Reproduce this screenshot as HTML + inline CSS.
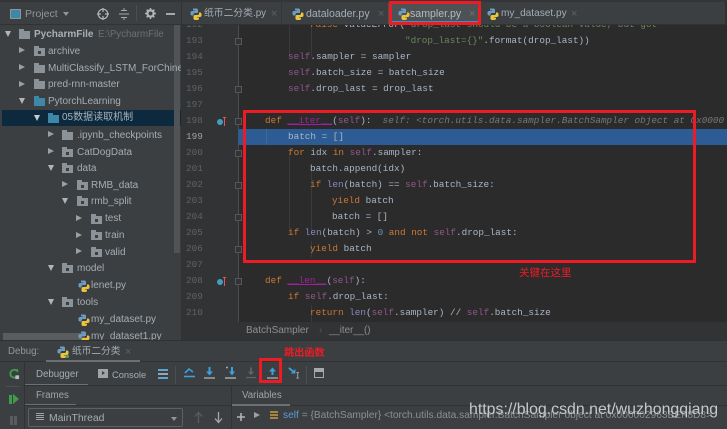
<!DOCTYPE html>
<html><head><meta charset="utf-8"><style>
html,body{margin:0;padding:0;background:#2b2b2b}
#p{position:relative;width:727px;height:429px;overflow:hidden;background:#2b2b2b;font-family:"Liberation Sans","Noto Sans CJK SC",sans-serif;filter:blur(.35px)}
#p div,#p svg{position:absolute}
.r{height:16px;line-height:16px;font-size:10px;color:#a4adb4;white-space:nowrap;margin-top:1px}
.c{font-family:"Liberation Mono",monospace;font-size:9.33px;height:16px;line-height:16px;color:#a9b7c6;white-space:pre}
.n{font-family:"Liberation Mono",monospace;font-size:9.33px;height:16px;line-height:16px;color:#606366;left:186px}
i{font-style:normal}
.k{color:#cc7832}.s{color:#94558d}.t{color:#6a8759}.b{color:#8888c6}.d{color:#6897bb}.m{color:#a020a0;text-decoration:underline}
.h{color:#787878;font-style:italic}
.x{width:0;height:0;border-top:3.5px solid transparent;border-bottom:3.5px solid transparent;border-left:6px solid #9aa0a4}
.o{width:0;height:0;border-left:3.5px solid transparent;border-right:3.5px solid transparent;border-top:6px solid #b0b5b8}
.f{width:11px;height:8px;background:#8b9398}
.f:before{content:"";position:absolute;left:0;top:-2px;width:5px;height:2px;background:#8b9398}
.q:after{content:"";position:absolute;left:4px;top:3px;width:3px;height:3px;background:#3c3f41}
.fb{background:#3d87a8}.fb:before{background:#3d87a8}
.g{width:1px;background:#3b3b3b}
.fo{width:5px;height:5px;border:1px solid #55585a;left:235px;background:#313335}
.rb{border:3px solid #ed1c24;box-sizing:border-box}
.l{font-size:9.7px;color:#a4adb4;white-space:nowrap;height:14px;line-height:14px}
.tb{font-size:10.5px}
</style></head><body><div id="p">
<svg width="0" height="0"><defs><symbol id="py" viewBox="0 0 12 12"><path d="M3 0.500h4l1 1V5H4.500L3.500 6V7.500H1.500L0.500 6.500V4l1-1H5V2.500H3z" fill="#6f9bc0"/><path d="M9 4.500h1.500l1 1V8l-1 1H7v.5h2V11l-1 1H4.500l-1-1V8l1-1H8l1-1z" fill="#eac43a"/></symbol></defs></svg>

<!-- top bar -->
<div style="left:0;top:0;width:727px;height:24px;background:#3c3f41"></div>
<div style="left:0;top:0;width:727px;height:2px;background:#333537"></div>
<div style="left:0;top:24px;width:727px;height:1px;background:#323232"></div>
<div style="left:181px;top:0;width:1px;height:340px;background:#323232"></div>

<div style="left:10px;top:9px;width:9px;height:8px;border:1px solid #8e9598;background:#3d87a8"></div>
<div class="l tb" style="left:25px;top:7px;color:#8f979b">Project</div>
<div class="o" style="left:63px;top:12px;border-top-width:4px;border-top-color:#8f979b"></div>
<svg style="left:97px;top:8px" width="12" height="12" viewBox="0 0 12 12"><circle cx="6" cy="6" r="4.800" fill="none" stroke="#b1b5b8" stroke-width="1.200"/><path d="M6 0v4M6 8v4M0 6h4M8 6h4" stroke="#b1b5b8" stroke-width="1.200"/></svg>
<svg style="left:118px;top:8px" width="12" height="12" viewBox="0 0 12 12"><path d="M1 6h10M3 2.500h6M3 9.500h6M6 0v3M6 9v3" stroke="#a5a9ac" stroke-width="1"/></svg>
<div style="left:136px;top:5px;width:1px;height:16px;background:#4c4f51"></div>
<svg style="left:145px;top:8px" width="11" height="11" viewBox="0 0 12 12"><circle cx="6" cy="6" r="3.400" fill="none" stroke="#b1b5b8" stroke-width="2.400"/><path d="M6 0v2M6 10v2M0 6h2M10 6h2M1.800 1.800l1.400 1.400M8.800 8.800l1.400 1.400M1.800 10.200l1.400-1.400M8.800 3.200l1.400-1.400" stroke="#b1b5b8" stroke-width="1.600"/></svg>
<div style="left:166px;top:13px;width:9px;height:1.500px;background:#a5a9ac"></div>

<!-- tabs -->
<svg style="left:190px;top:8px" width="12" height="12"><use href="#py"/></svg>
<div class="l" style="left:204px;top:7px;color:#a4adb4;font-size:9.8px">纸币二分类.py</div>
<div class="l" style="left:271px;top:7px;color:#5c6164;font-size:11px">×</div>
<div style="left:281px;top:2px;width:1px;height:22px;background:#343638"></div>
<svg style="left:292px;top:8px" width="12" height="12"><use href="#py"/></svg>
<div class="l" style="left:306px;top:7px;color:#a4adb4;font-size:10.6px">dataloader.py</div>
<div class="l" style="left:378px;top:7px;color:#5c6164;font-size:11px">×</div>
<div style="left:388px;top:3px;width:93px;height:21px;background:#4e5254"></div>
<div style="left:391px;top:21px;width:88px;height:2px;background:#4a88c7"></div>
<svg style="left:398px;top:8px" width="12" height="12"><use href="#py"/></svg>
<div class="l" style="left:410px;top:7px;color:#b3bac0;font-size:10.6px">sampler.py</div>
<div class="l" style="left:469px;top:7px;color:#6f7376;font-size:11px">×</div>
<svg style="left:487px;top:8px" width="12" height="12"><use href="#py"/></svg>
<div class="l" style="left:501px;top:7px;color:#a4adb4;font-size:10.1px">my_dataset.py</div>
<div class="l" style="left:571px;top:7px;color:#5c6164;font-size:11px">×</div>
<div style="left:725px;top:2px;width:2px;height:22px;background:#2f3133"></div>

<!-- sidebar -->
<div style="left:0;top:25px;width:181px;height:315px;background:#3c3f41"></div>
<div style="left:2px;top:110px;width:179px;height:16px;background:#0d293e"></div>
<div style="left:174px;top:25px;width:6px;height:228px;background:#515456"></div>
<div style="left:3px;top:333px;width:82px;height:7px;background:#5a5d5f"></div>

<div class="o" style="left:5px;top:31px"></div><div class="f" style="left:19px;top:31px"></div>
<div class="r" style="left:34px;top:26px;color:#a9b0b5;font-weight:bold">PycharmFile</div><div class="r" style="left:98px;top:26px;color:#6b7073;font-size:9.700px">E:\PycharmFile</div>

<div class="x" style="left:19px;top:47px"></div><div class="f q" style="left:34px;top:48px"></div><div class="r" style="left:48px;top:43px">archive</div>
<div class="x" style="left:19px;top:64px"></div><div class="f" style="left:34px;top:65px"></div><div class="r" style="left:48px;top:60px;width:133px;overflow:hidden">MultiClassify_LSTM_ForChinese</div>
<div class="x" style="left:19px;top:81px"></div><div class="f" style="left:34px;top:81px"></div><div class="r" style="left:48px;top:76px">pred-rnn-master</div>
<div class="o" style="left:19px;top:98px"></div><div class="f fb" style="left:34px;top:98px"></div><div class="r" style="left:48px;top:93px">PytorchLearning</div>
<div class="o" style="left:34px;top:115px;border-top-color:#c8ccd0"></div><div class="f fb" style="left:48px;top:115px"></div><div class="r" style="left:62px;top:110px;color:#aab3ba;margin-top:0">05数据读取机制</div>

<div class="x" style="left:48px;top:131px"></div><div class="f" style="left:62px;top:132px"></div><div class="r" style="left:77px;top:127px">.ipynb_checkpoints</div>
<div class="x" style="left:48px;top:148px"></div><div class="f q" style="left:62px;top:149px"></div><div class="r" style="left:77px;top:144px">CatDogData</div>
<div class="o" style="left:48px;top:165px"></div><div class="f q" style="left:62px;top:165px"></div><div class="r" style="left:77px;top:160px">data</div>
<div class="x" style="left:62px;top:181px"></div><div class="f q" style="left:77px;top:182px"></div><div class="r" style="left:91px;top:177px">RMB_data</div>
<div class="o" style="left:62px;top:198px"></div><div class="f q" style="left:77px;top:198px"></div><div class="r" style="left:91px;top:193px">rmb_split</div>
<div class="x" style="left:76px;top:215px"></div><div class="f q" style="left:91px;top:216px"></div><div class="r" style="left:105px;top:210px">test</div>
<div class="x" style="left:76px;top:232px"></div><div class="f q" style="left:91px;top:232px"></div><div class="r" style="left:105px;top:227px">train</div>
<div class="x" style="left:76px;top:248px"></div><div class="f q" style="left:91px;top:249px"></div><div class="r" style="left:105px;top:244px">valid</div>
<div class="o" style="left:48px;top:265px"></div><div class="f q" style="left:62px;top:265px"></div><div class="r" style="left:77px;top:260px">model</div>
<svg style="left:78px;top:280px" width="12" height="12"><use href="#py"/></svg><div class="r" style="left:91px;top:277px">lenet.py</div>
<div class="o" style="left:48px;top:299px"></div><div class="f q" style="left:62px;top:299px"></div><div class="r" style="left:77px;top:294px">tools</div>
<svg style="left:78px;top:314px" width="12" height="12"><use href="#py"/></svg><div class="r" style="left:91px;top:311px">my_dataset.py</div>
<svg style="left:78px;top:331px" width="12" height="9" viewBox="0 0 12 9"><use href="#py" width="12" height="12"/></svg>
<div style="left:91px;top:328px;width:90px;height:12px;overflow:hidden"><div class="r" style="left:0;top:0">my_dataset1.py</div></div>

<!-- gutter -->
<div style="left:182px;top:25px;width:56px;height:297px;background:#313335"></div>
<div style="left:238px;top:25px;width:1px;height:297px;background:#4a4c4e"></div>

<!-- guides -->
<div class="g" style="left:289px;top:25px;height:32px"></div>
<div class="g" style="left:289px;top:153px;height:80px"></div>
<div class="g" style="left:311px;top:25px;height:32px"></div>
<div class="g" style="left:311px;top:169px;height:64px"></div>
<div class="g" style="left:311px;top:241px;height:16px"></div>
<div class="g" style="left:311px;top:305px;height:17px"></div>

<!-- selected line -->
<div style="left:238px;top:129px;width:489px;height:16px;background:#2d5c94"></div>
<div style="left:266px;top:129px;width:1px;height:16px;background:#3d6a9e"></div>

<!-- scroll clip code -->
<div style="left:0;top:25px;width:727px;height:297px;overflow:hidden">
<div class="n" style="top:-8px">192</div>
<div class="c" style="left:310px;top:-8px"><i class="k">raise </i>ValueError(<i class="t">"drop_last should be a boolean value, but got</i></div>
</div>
<div class="n" style="top:33px">193</div>
<div class="c t" style="left:405px;top:33px">"drop_last={}"<i style="color:#a9b7c6">.format(drop_last))</i></div>
<div class="n" style="top:49px">194</div>
<div class="c" style="left:288px;top:49px"><i class="s">self</i>.sampler = sampler</div>
<div class="n" style="top:65px">195</div>
<div class="c" style="left:288px;top:65px"><i class="s">self</i>.batch_size = batch_size</div>
<div class="n" style="top:81px">196</div>
<div class="c" style="left:288px;top:81px"><i class="s">self</i>.drop_last = drop_last</div>
<div class="n" style="top:97px">197</div>
<div class="n" style="top:113px">198</div>
<div class="c" style="left:265px;top:113px"><i class="k">def </i><i class="m">__iter__</i>(<i class="s">self</i>):  <i class="h">self: &lt;torch.utils.data.sampler.BatchSampler object at 0x0000</i></div>
<div class="n" style="top:129px;color:#a4a3a3">199</div>
<div class="c" style="left:288px;top:129px">batch = []</div>
<div class="n" style="top:145px">200</div>
<div class="c" style="left:288px;top:145px"><i class="k">for </i>idx <i class="k">in </i><i class="s">self</i>.sampler:</div>
<div class="n" style="top:161px">201</div>
<div class="c" style="left:310px;top:161px">batch.append(idx)</div>
<div class="n" style="top:177px">202</div>
<div class="c" style="left:310px;top:177px"><i class="k">if </i><i class="b">len</i>(batch) == <i class="s">self</i>.batch_size:</div>
<div class="n" style="top:193px">203</div>
<div class="c" style="left:332px;top:193px"><i class="k">yield </i>batch</div>
<div class="n" style="top:209px">204</div>
<div class="c" style="left:332px;top:209px">batch = []</div>
<div class="n" style="top:225px">205</div>
<div class="c" style="left:288px;top:225px"><i class="k">if </i><i class="b">len</i>(batch) &gt; <i class="d">0</i> <i class="k">and not </i><i class="s">self</i>.drop_last:</div>
<div class="n" style="top:241px">206</div>
<div class="c" style="left:310px;top:241px"><i class="k">yield </i>batch</div>
<div class="n" style="top:257px">207</div>
<div class="n" style="top:273px">208</div>
<div class="c" style="left:265px;top:273px"><i class="k">def </i><i class="m">__len__</i>(<i class="s">self</i>):</div>
<div class="n" style="top:289px">209</div>
<div class="c" style="left:288px;top:289px"><i class="k">if </i><i class="s">self</i>.drop_last:</div>
<div class="n" style="top:305px">210</div>
<div class="c" style="left:310px;top:305px"><i class="k">return </i><i class="b">len</i>(<i class="s">self</i>.sampler) // <i class="s">self</i>.batch_size</div>

<!-- gutter marks -->
<div class="fo" style="top:38px"></div><div class="fo" style="top:86px"></div><div class="fo" style="top:118px"></div><div class="fo" style="top:150px"></div><div class="fo" style="top:182px"></div><div class="fo" style="top:214px"></div><div class="fo" style="top:246px"></div><div class="fo" style="top:278px"></div>
<div style="left:217px;top:119px;width:6px;height:6px;border-radius:50%;background:#3f9ec4"></div>
<div style="left:224px;top:117px;width:1px;height:9px;background:#e05555"></div>
<div style="left:223px;top:117px;width:3px;height:1px;background:#e05555"></div>
<div style="left:217px;top:279px;width:6px;height:6px;border-radius:50%;background:#3f9ec4"></div>
<div style="left:224px;top:277px;width:1px;height:9px;background:#e05555"></div>
<div style="left:223px;top:277px;width:3px;height:1px;background:#e05555"></div>

<!-- breadcrumb -->
<div style="left:182px;top:322px;width:545px;height:18px;background:#313335"></div>
<div class="l" style="left:246px;top:324px;color:#8d9195;font-size:10px">BatchSampler</div>
<div class="l" style="left:319px;top:324px;color:#55585a">›</div>
<div class="l" style="left:329px;top:324px;color:#8d9195">__iter__()</div>

<!-- debug panel -->
<div style="left:0;top:340px;width:727px;height:89px;background:#3c3f41"></div>
<div style="left:0;top:340px;width:727px;height:1px;background:#2f3133"></div>
<div style="left:0;top:361px;width:727px;height:1px;background:#323232"></div>
<div class="l" style="left:8px;top:345px;color:#8f979b">Debug:</div>
<svg style="left:57px;top:346px" width="12" height="12"><use href="#py"/></svg>
<div style="left:66px;top:355px;width:3px;height:3px;border-radius:50%;background:#4caf50"></div>
<div class="l" style="left:72px;top:345px;color:#a4adb4">纸币二分类</div>
<div class="l" style="left:125px;top:345px;color:#5c6164;font-size:11px">×</div>
<div style="left:46px;top:360px;width:94px;height:2px;background:#6d7073"></div>

<svg style="left:8px;top:368px" width="12" height="12" viewBox="0 0 13 13"><path d="M10 3.500A4.200 4.200 0 1 0 10.500 8" fill="none" stroke="#3f9c4b" stroke-width="2"/><path d="M7 2l4-1v4z" fill="#3f9c4b"/><rect x="8" y="8" width="4" height="4" fill="#b8bcc0"/></svg>
<div style="left:24px;top:362px;width:1px;height:67px;background:#323232"></div>
<div style="left:6px;top:386px;width:14px;height:1px;background:#4c4f51"></div>
<div style="left:9px;top:395px;width:3px;height:9px;background:#3f9c4b"></div>
<div style="left:13px;top:394px;width:0;height:0;border-top:5.500px solid transparent;border-bottom:5.500px solid transparent;border-left:6.500px solid #3f9c4b"></div>
<div style="left:10px;top:416px;width:3px;height:9px;background:#5a5d5f"></div><div style="left:14px;top:416px;width:3px;height:9px;background:#5a5d5f"></div>

<div class="l" style="left:36px;top:368px;color:#a4adb4">Debugger</div>
<div style="left:25px;top:384px;width:63px;height:2px;background:#6d7073"></div>
<div style="left:98px;top:369px;width:10px;height:9px;background:#a0a4a7"></div>
<div style="left:102px;top:371px;width:0;height:0;border-top:2.500px solid transparent;border-bottom:2.500px solid transparent;border-left:3px solid #3c3f41"></div>
<div class="l" style="left:112px;top:368px;color:#a4adb4;font-size:9.300px">Console</div>
<div style="left:158px;top:369px;width:10px;height:2px;background:#5aa5d6"></div><div style="left:158px;top:373px;width:10px;height:2px;background:#a0a4a7"></div><div style="left:158px;top:377px;width:10px;height:2px;background:#5aa5d6"></div>
<div style="left:175px;top:366px;width:1px;height:18px;background:#4c4f51"></div>
<svg style="left:184px;top:366px" width="11" height="13" viewBox="0 0 11 13"><path d="M1 7l4-4 4 3" fill="none" stroke="#3f9fd8" stroke-width="1.600"/><path d="M0 10.500h11" stroke="#3f9fd8" stroke-width="1.600"/></svg>
<svg style="left:204px;top:366px" width="11" height="14" viewBox="0 0 11 14"><path d="M5.500 1v6" stroke="#3f9fd8" stroke-width="2"/><path d="M2 5.500h7l-3.500 4z" fill="#3f9fd8"/><path d="M0 12h11" stroke="#a5a9ac" stroke-width="1.400"/></svg>
<svg style="left:225px;top:366px" width="11" height="14" viewBox="0 0 11 14"><path d="M7 1v6" stroke="#3f9fd8" stroke-width="2"/><path d="M4 5.500h6l-3 4z" fill="#3f9fd8"/><path d="M1 1.500h2M0 12h11" stroke="#a5a9ac" stroke-width="1.400"/></svg>
<svg style="left:246px;top:366px" width="10" height="14" viewBox="0 0 11 14"><path d="M5.500 1v6" stroke="#5f6366" stroke-width="2"/><path d="M2 5.500h7l-3.500 4z" fill="#5f6366"/><path d="M0 12h11" stroke="#5f6366" stroke-width="1.400"/></svg>
<svg style="left:267px;top:366px" width="11" height="14" viewBox="0 0 11 14"><path d="M5.500 9V4" stroke="#3f9fd8" stroke-width="2"/><path d="M2 5.500h7L5.500 1.500z" fill="#3f9fd8"/><path d="M0 12h11" stroke="#a5a9ac" stroke-width="1.400"/></svg>
<svg style="left:288px;top:367px" width="12" height="12" viewBox="0 0 13 13"><path d="M1 1l6 5" stroke="#3f9fd8" stroke-width="2"/><path d="M3 7h5V2z" fill="#3f9fd8"/><path d="M9 6h3M9 12h3M10.500 6v6" stroke="#a5a9ac" stroke-width="1"/></svg>
<div style="left:306px;top:366px;width:1px;height:18px;background:#4c4f51"></div>
<div style="left:314px;top:368px;width:8px;height:8px;border:1px solid #a5a9ac;background:linear-gradient(#a5a9ac 0 3px,transparent 3px)"></div>

<div class="rb" style="left:259px;top:358px;width:23px;height:25px"></div>
<div style="left:284px;top:347px;font-size:10.200px;line-height:14px;color:#ed1c24;white-space:nowrap;font-weight:bold">跳出函数</div>

<div style="left:25px;top:385px;width:702px;height:1px;background:#323232"></div>
<div class="l" style="left:36px;top:389px;color:#9ea5aa">Frames</div>
<div style="left:25px;top:404px;width:51px;height:2px;background:#6d7073"></div>
<div style="left:25px;top:405px;width:702px;height:1px;background:#323232"></div>
<div style="left:231px;top:385px;width:1px;height:44px;background:#323232"></div>
<div class="l" style="left:242px;top:389px;color:#9ea5aa">Variables</div>
<div style="left:232px;top:404px;width:58px;height:2px;background:#6d7073"></div>

<div style="left:28px;top:408px;width:155px;height:19px;border:1px solid #5e6163;border-radius:2px;box-sizing:border-box"></div>
<div style="left:36px;top:413px;width:8px;height:8px;background:repeating-linear-gradient(#a0a4a7 0 1px,transparent 1px 2px)"></div>
<div class="l" style="left:49px;top:412px;color:#a4adb4;font-size:10.400px">MainThread</div>
<div class="o" style="left:171px;top:417px;border-top-width:4px;border-top-color:#8f979b"></div>
<svg style="left:193px;top:411px" width="11" height="13" viewBox="0 0 11 13"><path d="M5.500 12V2M2 5.500l3.500-4 3.500 4" fill="none" stroke="#5a5d5f" stroke-width="1.300"/></svg>
<svg style="left:213px;top:411px" width="11" height="13" viewBox="0 0 11 13"><path d="M5.500 1v10M2 7.500l3.500 4 3.500-4" fill="none" stroke="#a5a9ac" stroke-width="1.300"/></svg>
<svg style="left:236px;top:412px" width="10" height="10" viewBox="0 0 10 10"><path d="M5 1v8M1 5h8" stroke="#b1b5b8" stroke-width="1.600"/></svg>
<div class="x" style="left:254px;top:412px"></div>
<div style="left:270px;top:411px;width:8px;height:9px;background:repeating-linear-gradient(#a8853f 0 2px,transparent 2px 3px)"></div>
<div class="l" style="left:283px;top:409px;font-size:10.200px;color:#8a9095;white-space:pre"><i style="color:#5a9bd5">self</i> = {BatchSampler} &lt;torch.utils.data.sampler.BatchSampler object at 0x000002963BEF8D8&gt;</div>

<!-- red annotations -->
<div class="rb" style="left:389px;top:1px;width:92px;height:24px"></div>
<div class="rb" style="left:243px;top:110px;width:453px;height:153px"></div>
<div style="left:519px;top:266px;font-size:10.500px;line-height:14px;color:#ed1c24;white-space:nowrap">关键在这里</div>

<!-- watermark -->
<div style="left:469px;top:401px;font-size:15.900px;line-height:18px;color:#c6c8c9;white-space:nowrap">https://blog.csdn.net/wuzhongqiang</div>
</div></body></html>
